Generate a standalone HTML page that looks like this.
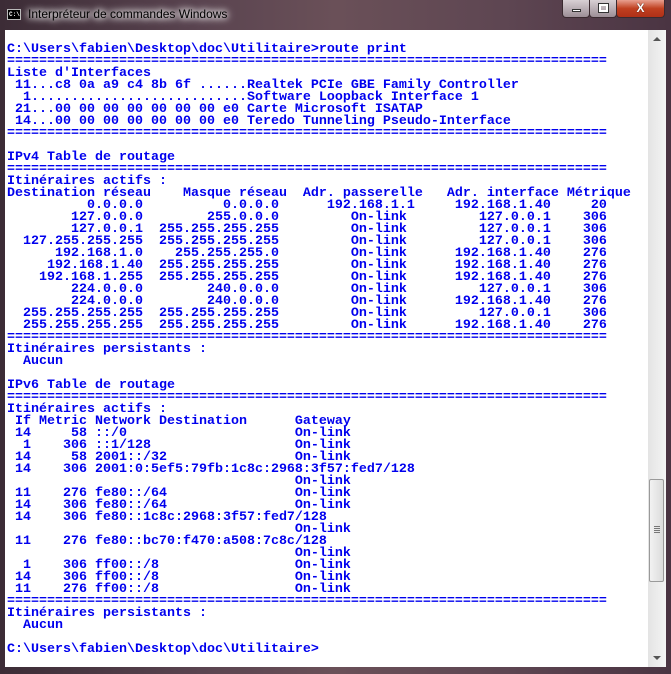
<!DOCTYPE html>
<html><head><meta charset="utf-8">
<style>
html,body{margin:0;padding:0;width:671px;height:674px;overflow:hidden;background:#4a3844;}
.frame{position:absolute;left:0;top:0;width:671px;height:674px;background:linear-gradient(90deg,#3c2c36 0%,#5a4450 30%,#6a5058 50%,#5e4652 75%,#4a3442 100%);}
.title{position:absolute;left:28px;top:7px;font:12px "Liberation Sans",sans-serif;color:#000;text-shadow:0 0 6px #fff,0 0 8px #fff,0 0 10px #fff;}
.ico{position:absolute;left:7px;top:9px;width:14px;height:11px;background:#000;border:1px solid #bbb;box-sizing:border-box;color:#fff;font:bold 6px "Liberation Mono",monospace;line-height:9px;padding-left:1px;}
.btn{position:absolute;top:0;height:18px;border:1px solid #3a2a30;border-top:none;box-sizing:border-box;border-radius:0 0 4px 4px;}
.min{left:562px;width:28px;background:linear-gradient(#d8d0d4,#9c8e96);}
.max{left:589px;width:28px;background:linear-gradient(#d8d0d4,#9c8e96);}
.cls{left:616px;width:49px;background:linear-gradient(#e8a090,#c04020 50%,#b03018);}
.client{position:absolute;left:5px;top:30px;width:643px;height:637px;background:#fff;overflow:hidden;}
pre{margin:0;position:absolute;left:2px;top:2px;font:bold 13.33px/12px "Liberation Mono",monospace;color:#0000ee;white-space:pre;}
.sb{position:absolute;left:648px;top:30px;width:18px;height:637px;background:linear-gradient(90deg,#e4e4e4,#f4f4f4);}
.thumb{position:absolute;left:1px;top:449px;width:15px;height:103px;border:1px solid #9a9a9a;border-radius:2px;background:linear-gradient(90deg,#f2f2f2,#dcdcdc);box-sizing:border-box;}
.grip{position:absolute;left:4px;top:46px;width:6px;height:7px;background:repeating-linear-gradient(#777 0 1px,transparent 1px 2px);}
.arr{position:absolute;left:5px;width:0;height:0;border-left:4px solid transparent;border-right:4px solid transparent;}
</style></head><body>
<div class="frame"></div>
<div class="ico">C:\</div>
<div class="title">Interpréteur de commandes Windows</div>
<div class="btn min"><div style="position:absolute;left:9px;top:9px;width:9px;height:3px;background:#fff;border:1px solid #333;box-sizing:border-box"></div></div>
<div class="btn max"><div style="position:absolute;left:9px;top:4px;width:9px;height:8px;border:2px solid #fff;outline:1px solid #333;box-sizing:border-box"></div></div>
<div class="btn cls"><div style="position:absolute;left:0;width:47px;top:1px;text-align:center;font:bold 12px 'Liberation Sans',sans-serif;color:#fff;text-shadow:0 0 1px #000">X</div></div>
<div class="client"><pre>

C:\Users\fabien\Desktop\doc\Utilitaire&gt;route print
===========================================================================
Liste d'Interfaces
 11...c8 0a a9 c4 8b 6f ......Realtek PCIe GBE Family Controller
  1...........................Software Loopback Interface 1
 21...00 00 00 00 00 00 00 e0 Carte Microsoft ISATAP
 14...00 00 00 00 00 00 00 e0 Teredo Tunneling Pseudo-Interface
===========================================================================

IPv4 Table de routage
===========================================================================
Itinéraires actifs :
Destination réseau    Masque réseau  Adr. passerelle   Adr. interface Métrique
          0.0.0.0          0.0.0.0      192.168.1.1     192.168.1.40     20
        127.0.0.0        255.0.0.0         On-link         127.0.0.1    306
        127.0.0.1  255.255.255.255         On-link         127.0.0.1    306
  127.255.255.255  255.255.255.255         On-link         127.0.0.1    306
      192.168.1.0    255.255.255.0         On-link      192.168.1.40    276
     192.168.1.40  255.255.255.255         On-link      192.168.1.40    276
    192.168.1.255  255.255.255.255         On-link      192.168.1.40    276
        224.0.0.0        240.0.0.0         On-link         127.0.0.1    306
        224.0.0.0        240.0.0.0         On-link      192.168.1.40    276
  255.255.255.255  255.255.255.255         On-link         127.0.0.1    306
  255.255.255.255  255.255.255.255         On-link      192.168.1.40    276
===========================================================================
Itinéraires persistants :
  Aucun

IPv6 Table de routage
===========================================================================
Itinéraires actifs :
 If Metric Network Destination      Gateway
 14     58 ::/0                     On-link
  1    306 ::1/128                  On-link
 14     58 2001::/32                On-link
 14    306 2001:0:5ef5:79fb:1c8c:2968:3f57:fed7/128
                                    On-link
 11    276 fe80::/64                On-link
 14    306 fe80::/64                On-link
 14    306 fe80::1c8c:2968:3f57:fed7/128
                                    On-link
 11    276 fe80::bc70:f470:a508:7c8c/128
                                    On-link
  1    306 ff00::/8                 On-link
 14    306 ff00::/8                 On-link
 11    276 ff00::/8                 On-link
===========================================================================
Itinéraires persistants :
  Aucun

C:\Users\fabien\Desktop\doc\Utilitaire&gt;
</pre></div>
<div class="sb">
<div class="arr" style="top:7px;border-bottom:4px solid #555"></div>
<div class="thumb"><div class="grip"></div></div>
<div class="arr" style="top:626px;border-top:4px solid #555"></div>
</div>
</body></html>
